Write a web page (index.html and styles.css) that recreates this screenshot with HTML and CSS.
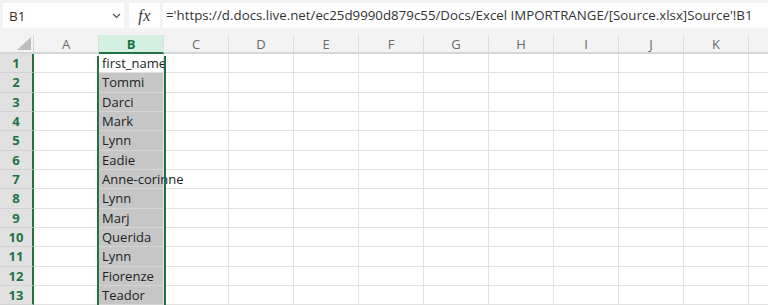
FILE: index.html
```html
<!DOCTYPE html>
<html lang="en">
<head>
    <meta charset="UTF-8">
    <meta name="viewport" content="width=device-width, initial-scale=1.0">
    <title>Excel IMPORTRANGE</title>
    <link rel="stylesheet" href="styles.css">
</head>
<body>
    <div class="formula-bar">
        <div class="name-box">
            <span>B1</span>
            <svg class="chevron" width="9" height="6" viewBox="0 0 9 6"><polyline points="1,1 4.5,4.5 8,1" fill="none" stroke="#555" stroke-width="1.2"/></svg>
        </div>
        <div class="fx-box"><span class="fx">fx</span></div>
        <div class="formula-input">='https://d.docs.live.net/ec25d9990d879c55/Docs/Excel IMPORTRANGE/[Source.xlsx]Source'!B1</div>
    </div>

    <div class="sheet">
        <div class="head-row">
            <div class="corner">
                <svg width="14" height="13" viewBox="0 0 14 13"><polygon points="14,0 14,13 0,13" fill="#bdbdbd"/></svg>
            </div>
            <div class="col-head">A</div>
            <div class="col-head active">B</div>
            <div class="col-head">C</div>
            <div class="col-head">D</div>
            <div class="col-head">E</div>
            <div class="col-head">F</div>
            <div class="col-head">G</div>
            <div class="col-head">H</div>
            <div class="col-head">I</div>
            <div class="col-head">J</div>
            <div class="col-head">K</div>
            <div class="col-head"></div>
        </div>

        <div class="row"><div class="row-head">1</div><div class="cell"></div><div class="cell col-b current">first_name</div><div class="rest"></div></div>
        <div class="row"><div class="row-head">2</div><div class="cell"></div><div class="cell col-b">Tommi</div><div class="rest"></div></div>
        <div class="row"><div class="row-head">3</div><div class="cell"></div><div class="cell col-b">Darci</div><div class="rest"></div></div>
        <div class="row"><div class="row-head">4</div><div class="cell"></div><div class="cell col-b">Mark</div><div class="rest"></div></div>
        <div class="row"><div class="row-head">5</div><div class="cell"></div><div class="cell col-b">Lynn</div><div class="rest"></div></div>
        <div class="row"><div class="row-head">6</div><div class="cell"></div><div class="cell col-b">Eadie</div><div class="rest"></div></div>
        <div class="row"><div class="row-head">7</div><div class="cell"></div><div class="cell col-b spill">Anne-corinne</div><div class="rest"></div></div>
        <div class="row"><div class="row-head">8</div><div class="cell"></div><div class="cell col-b">Lynn</div><div class="rest"></div></div>
        <div class="row"><div class="row-head">9</div><div class="cell"></div><div class="cell col-b">Marj</div><div class="rest"></div></div>
        <div class="row"><div class="row-head">10</div><div class="cell"></div><div class="cell col-b">Querida</div><div class="rest"></div></div>
        <div class="row"><div class="row-head">11</div><div class="cell"></div><div class="cell col-b">Lynn</div><div class="rest"></div></div>
        <div class="row"><div class="row-head">12</div><div class="cell"></div><div class="cell col-b">Fiorenze</div><div class="rest"></div></div>
        <div class="row"><div class="row-head">13</div><div class="cell"></div><div class="cell col-b">Teador</div><div class="rest"></div></div>

        <div class="selection"></div>
    </div>
</body>
</html>
```

FILE: styles.css
```css
* {
    box-sizing: border-box;
}
body {
    margin: 0;
    background-color: #f3f3f3;
    font-family: "Open Sans", "Liberation Sans", sans-serif;
    overflow: hidden;
    color: #222;
}
.formula-bar {
    display: flex;
    height: 35px;
    padding: 3px 0 0 3px;
}
.name-box {
    display: flex;
    align-items: center;
    justify-content: space-between;
    width: 121px;
    height: 25px;
    padding: 0 3px 0 6px;
    background-color: #ffffff;
    font-size: 13.5px;
    color: #333;
}
.chevron {
    margin-top: 1px;
}
.fx-box {
    display: flex;
    align-items: center;
    justify-content: center;
    width: 31px;
    height: 25px;
    margin-left: 5px;
    background-color: #ffffff;
}
.fx {
    font-family: "Liberation Serif", serif;
    font-style: italic;
    font-size: 16px;
    color: #333;
    letter-spacing: 0.5px;
}
.formula-input {
    flex: 1;
    min-width: 0;
    height: 25px;
    margin-left: 3px;
    padding-left: 3px;
    background-color: #ffffff;
    font-size: 13.3px;
    line-height: 25px;
    white-space: nowrap;
    color: #333;
}
.sheet {
    position: relative;
    background-color: #ffffff;
}
.head-row {
    display: flex;
    height: 19px;
    background-color: #f3f3f3;
    border-bottom: 2px solid #d6d6d6;
}
.corner {
    flex: 0 0 34px;
    display: flex;
    align-items: flex-end;
    justify-content: flex-end;
    padding: 0 2px 2px 0;
    border-right: 1px solid #d6d6d6;
}
.col-head {
    flex: 0 0 65px;
    text-align: center;
    font-size: 13px;
    line-height: 18px;
    color: #6a6a6a;
    border-right: 1px solid #dcdcdc;
}
.col-head.active {
    background-color: #d3f0e0;
    color: #217346;
    font-weight: 700;
    border-bottom: 2px solid #217346;
    margin-bottom: -2px;
}
.row {
    display: flex;
    height: 19.33px;
}
.row-head {
    flex: 0 0 34px;
    text-align: center;
    font-size: 13px;
    font-weight: 700;
    line-height: 18px;
    color: #217346;
    background-color: #e1e1e1;
    border-right: 2px solid #217346;
    border-bottom: 1px solid #d2d2d2;
}
.cell {
    flex: 0 0 65px;
    min-width: 0;
    padding-left: 3px;
    font-size: 13px;
    line-height: 18px;
    white-space: nowrap;
    overflow: hidden;
    border-right: 1px solid #e1e1e1;
    border-bottom: 1px solid #e1e1e1;
}
.col-b {
    background-color: #c6c6c6;
    border-bottom-color: #d4d4d4;
    position: relative;
    z-index: 1;
    overflow: visible;
}
.col-b.current {
    background-color: #ffffff;
    border-bottom-color: #e1e1e1;
}
.rest {
    flex: 1;
    border-bottom: 1px solid #e1e1e1;
    background-image: repeating-linear-gradient(to right, transparent 0 64px, #e1e1e1 64px 65px);
}
.selection {
    position: absolute;
    top: 21px;
    bottom: 0;
    left: 97px;
    width: 69px;
    border-left: 2px solid #217346;
    border-right: 2px solid #217346;
    z-index: 2;
}
```
